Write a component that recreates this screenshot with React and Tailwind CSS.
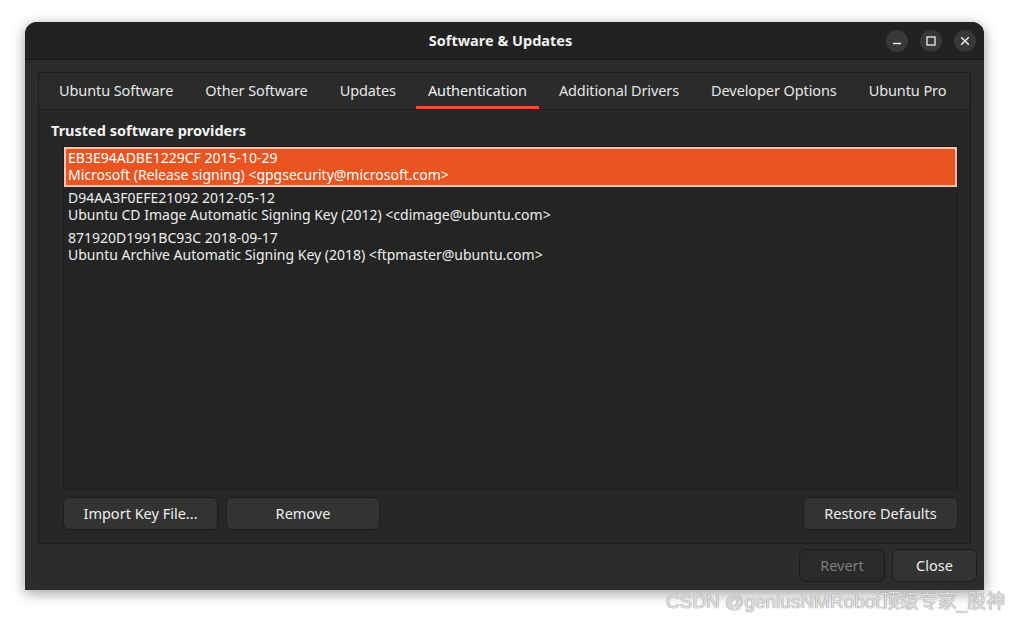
import React, { useState } from 'react'

// Software & Updates — Authentication tab (Yaru dark look)

const TABS = [
  'Ubuntu Software',
  'Other Software',
  'Updates',
  'Authentication',
  'Additional Drivers',
  'Developer Options',
  'Ubuntu Pro',
]

const KEYS = [
  { id: 'EB3E94ADBE1229CF 2015-10-29', name: 'Microsoft (Release signing) <gpgsecurity@microsoft.com>' },
  { id: 'D94AA3F0EFE21092 2012-05-12', name: 'Ubuntu CD Image Automatic Signing Key (2012) <cdimage@ubuntu.com>' },
  { id: '871920D1991BC93C 2018-09-17', name: 'Ubuntu Archive Automatic Signing Key (2018) <ftpmaster@ubuntu.com>' },
]

function TitleButton({ children }) {
  return (
    <div className="w-[22px] h-[22px] rounded-full bg-[#383838] flex items-center justify-center">
      {children}
    </div>
  )
}

function Button({ children, className = '', disabled = false }) {
  return (
    <button
      className={
        'h-[33px] rounded-[6px] border border-[#1c1c1c] text-[14.5px] ' +
        (disabled ? 'bg-[#2a2a2a] text-[#7d7d7d] ' : 'bg-[#333333] text-[#eeeeee] ') +
        className
      }
    >
      {children}
    </button>
  )
}

export default function App() {
  const [tab] = useState('Authentication')
  const [selected, setSelected] = useState(0)

  return (
    <div
      className="relative w-[1009px] h-[618px] bg-white overflow-hidden"
      style={{ fontFamily: '"Noto Sans", sans-serif' }}
    >
      {/* ── window ── */}
      <div className="ml-[25px] mt-[22px] w-[959px] h-[568px] rounded-t-[12px] bg-[#2c2c2c] shadow-[0_3px_14px_rgba(0,0,0,0.4)] flex flex-col overflow-hidden">
        {/* title bar */}
        <div className="h-[38px] shrink-0 bg-[#222222] border-b border-[#1a1a1a] flex items-center">
          <div className="flex-1" />
          <div className="text-[14.5px] font-bold text-[#f0f0f0]">Software &amp; Updates</div>
          <div className="flex-1 flex justify-end items-center gap-[12px] pr-[8px]">
            <TitleButton>
              <svg width="10" height="10" viewBox="0 0 10 10">
                <path d="M1 7.5h8" stroke="#eee" strokeWidth="1.3" />
              </svg>
            </TitleButton>
            <TitleButton>
              <svg width="10" height="10" viewBox="0 0 10 10">
                <rect x="1" y="1" width="8" height="8" fill="none" stroke="#eee" strokeWidth="1.3" />
              </svg>
            </TitleButton>
            <TitleButton>
              <svg width="10" height="10" viewBox="0 0 10 10">
                <path d="M1.2 1.2l7.6 7.6M8.8 1.2l-7.6 7.6" stroke="#eee" strokeWidth="1.4" />
              </svg>
            </TitleButton>
          </div>
        </div>

        {/* body */}
        <div className="flex-1 flex flex-col px-[13px] pt-[12px]">
          {/* notebook */}
          <div className="h-[472px] border border-[#1c1c1c] flex flex-col">
            <div className="h-[37px] shrink-0 bg-[#2b2b2b] border-b border-[#1c1c1c] flex pl-[4px]">
              {TABS.map((t) => (
                <div
                  key={t}
                  className={
                    'relative shrink-0 whitespace-nowrap mx-[4px] px-[12px] flex items-center pb-[1px] text-[14.5px] tracking-[-0.1px] ' +
                    (t === tab ? 'text-[#f2f2f2]' : 'text-[#e6e6e6]')
                  }
                >
                  {t}
                  {t === tab && <div className="absolute left-0 right-0 bottom-0 h-[3px] bg-[#e95420]" />}
                </div>
              ))}
            </div>

            <div className="flex-1 bg-[#272727] px-[12px] pt-[10px] pb-[13px] flex flex-col">
              <div className="text-[14.5px] font-bold text-[#f2f2f2] leading-[20px]">Trusted software providers</div>
              <div className="ml-[12px] mt-[6px] h-[344px] border border-[#1c1c1c] bg-[#242424]">
                {KEYS.map((k, i) => (
                  <div
                    key={k.id}
                    onClick={() => setSelected(i)}
                    className={
                      'h-[40px] px-[2px] pb-[2px] flex flex-col justify-center text-[14px] leading-[17px] ' +
                      (i === selected
                        ? 'bg-[#e95420] text-white border-2 border-[#f7c4ad]'
                        : 'text-[#eeeeee] border-2 border-transparent')
                    }
                  >
                    <div>{k.id}</div>
                    <div>{k.name}</div>
                  </div>
                ))}
              </div>
              <div className="ml-[12px] mt-[7px] flex gap-[8px]">
                <Button className="w-[155px]">Import Key File...</Button>
                <Button className="w-[154px]">Remove</Button>
                <div className="flex-1" />
                <Button className="w-[155px]">Restore Defaults</Button>
              </div>
            </div>
          </div>

          {/* dialog buttons */}
          <div className="mt-[5px] mr-[-6px] flex justify-end gap-[7px]">
            <Button className="w-[86px]" disabled>
              Revert
            </Button>
            <Button className="w-[85px] bg-[#2f2f2f]">Close</Button>
          </div>
        </div>
      </div>

      {/* watermark */}
      <div
        className="absolute left-[666px] top-[588px] text-[19px] text-[#e2e2e2] whitespace-nowrap"
        style={{
          fontFamily: '"Liberation Sans", "Noto Sans CJK SC", sans-serif',
          textShadow: '0 0 1px #8a8a8a, 0 0 1px #8a8a8a',
        }}
      >
        CSDN @geniusNMRobot顶级专家_股神
      </div>
    </div>
  )
}
